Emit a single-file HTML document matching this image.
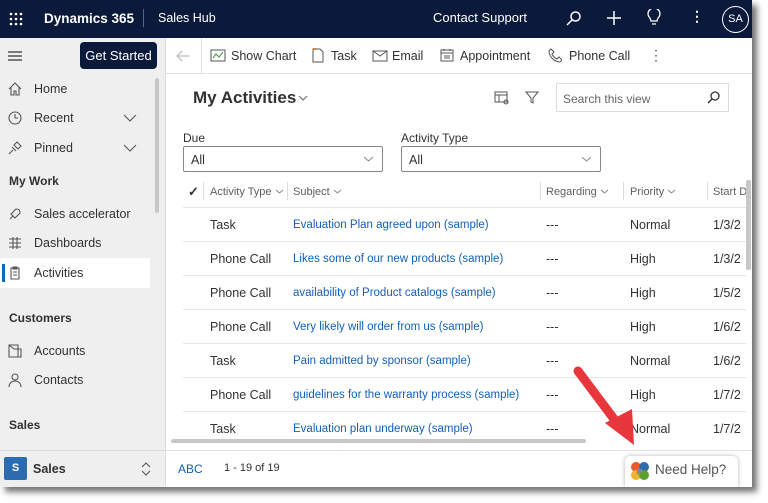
<!DOCTYPE html>
<html><head><meta charset="utf-8"><style>
*{margin:0;padding:0;box-sizing:border-box}
body{width:768px;height:503px;background:#fff;font-family:"Liberation Sans",sans-serif;position:relative;overflow:hidden;font-size:12px;color:#323130}
.frame{position:absolute;left:0;top:0;width:752px;height:487px;box-shadow:5px 5px 6px rgba(0,0,0,.55);overflow:hidden;background:#fff}
.top{position:absolute;left:0;top:0;width:752px;height:38px;background:#0b1a3b;color:#fff}
.a{position:absolute}
.side{position:absolute;left:0;top:38px;width:166px;height:449px;background:#efefef;border-right:1px solid #ddd}
.nav{position:absolute;left:34px;font-size:12.5px;color:#323130}
.ic{position:absolute;left:8px;width:14px;height:14px}
.cmd{position:absolute;left:166px;top:38px;width:586px;height:36px;border-bottom:1px solid #e1e1e1;font-size:12.5px}
.row{position:absolute;left:183px;width:563px;height:34px;border-bottom:1px solid #e6e6e6;font-size:12.5px}
.row span{position:absolute;top:10px}
.row span.lk{top:11px}
.lk{color:#1160b7;font-size:11.5px}
.hd{position:absolute;top:186px;font-size:11px;color:#605e5c}
.hd svg{margin-left:3px;vertical-align:1px}
.sel{position:absolute;height:26px;border:1px solid #8a8886;border-radius:2px;font-size:12.5px;padding:6px 7px}
</style></head><body><div class="frame">
<div class="top">
<svg class="a" style="left:9px;top:12px" width="14" height="14"><g fill="#fff"><circle cx="2" cy="2" r="1.3"/><circle cx="7" cy="2" r="1.3"/><circle cx="12" cy="2" r="1.3"/><circle cx="2" cy="7" r="1.3"/><circle cx="7" cy="7" r="1.3"/><circle cx="12" cy="7" r="1.3"/><circle cx="2" cy="12" r="1.3"/><circle cx="7" cy="12" r="1.3"/><circle cx="12" cy="12" r="1.3"/></g></svg>
<div class="a" style="left:44px;top:11px;font-weight:bold;font-size:13.5px">Dynamics 365</div>
<div class="a" style="left:143px;top:9px;width:1px;height:18px;background:#5a6580"></div>
<div class="a" style="left:158px;top:11px;font-size:12.5px">Sales Hub</div>
<div class="a" style="left:433px;top:10px;font-size:13px">Contact Support</div>
<svg class="a" style="left:566px;top:10px" width="16" height="16" fill="none" stroke="#fff" stroke-width="1.5"><circle cx="9.5" cy="6.5" r="4.5"/><path d="M6 10l-5 5"/></svg>
<svg class="a" style="left:606px;top:10px" width="16" height="16" stroke="#fff" stroke-width="1.5"><path d="M8 1v14M1 8h14"/></svg>
<svg class="a" style="left:647px;top:9px" width="14" height="18" fill="none" stroke="#fff" stroke-width="1.3"><path d="M4 12c0-3-3-4-3-7a6 6 0 0 1 12 0c0 3-3 4-3 7zM5 15h4"/></svg>
<div class="a" style="left:690px;top:8px;font-size:14px;font-weight:bold">⋮</div>
<div class="a" style="left:722px;top:6px;width:27px;height:27px;border:1px solid #fff;border-radius:50%;font-size:11px;text-align:center;line-height:25px">SA</div>
</div>
<div class="side">
<svg class="a" style="left:8px;top:13px" width="14" height="10" stroke="#333" stroke-width="1.2"><path d="M0 1h14M0 5h14M0 9h14"/></svg>
<div class="a" style="left:80px;top:4px;width:77px;height:27px;background:#0b1a3b;border-radius:4px;color:#fff;font-size:13px;text-align:center;line-height:27px">Get Started</div>
<div class="a" style="left:155px;top:40px;width:4px;height:135px;background:#c8c8c8;border-radius:2px"></div>
<svg class="ic" style="top:44px" fill="none" stroke="#555" stroke-width="1.1"><path d="M1 7L7 1l6 6M3 5v8h3v-4h2v4h3V5"/></svg><div class="nav" style="top:44px">Home</div>
<svg class="ic" style="top:73px" fill="none" stroke="#555" stroke-width="1.1"><circle cx="7" cy="7" r="6"/><path d="M7 3v4h3"/></svg><div class="nav" style="top:73px">Recent</div>
<svg class="a" style="left:123px;top:76px" width="14" height="8" fill="none" stroke="#555" stroke-width="1.1"><path d="M1 1l6 6 6-6"/></svg>
<svg class="ic" style="top:103px" fill="none" stroke="#555" stroke-width="1.1"><path d="M1 13l4-4M4 6l4 4M6 4l4 4 3-3-4-4z"/></svg><div class="nav" style="top:103px">Pinned</div>
<svg class="a" style="left:123px;top:106px" width="14" height="8" fill="none" stroke="#555" stroke-width="1.1"><path d="M1 1l6 6 6-6"/></svg>
<div class="a" style="left:9px;top:136px;font-weight:bold;font-size:12px">My Work</div>
<svg class="ic" style="top:169px" fill="none" stroke="#555" stroke-width="1.1"><path d="M2 12l3-3M8 2c3 0 4 1 4 4l-5 5-4-4z"/></svg><div class="nav" style="top:169px">Sales accelerator</div>
<svg class="ic" style="top:198px" fill="none" stroke="#555" stroke-width="1.1"><path d="M1 3h12M1 7h12M1 11h12M5 1v12M9 1v12"/></svg><div class="nav" style="top:198px">Dashboards</div>
<div class="a" style="left:0;top:220px;width:150px;height:30px;background:#fff"></div>
<div class="a" style="left:2px;top:226px;width:3px;height:18px;background:#0f6cbd"></div>
<svg class="ic" style="top:228px" fill="none" stroke="#555" stroke-width="1.1"><path d="M3 2h8v11H3zM5 1h4v2H5zM5 6h4M5 9h4"/></svg><div class="nav" style="top:228px">Activities</div>
<div class="a" style="left:9px;top:273px;font-weight:bold;font-size:12px">Customers</div>
<svg class="ic" style="top:306px" fill="none" stroke="#555" stroke-width="1.1"><path d="M1 1h9v12H1zM1 1l5 4h7v8H10"/></svg><div class="nav" style="top:306px">Accounts</div>
<svg class="ic" style="top:335px" fill="none" stroke="#555" stroke-width="1.1"><circle cx="7" cy="4" r="3"/><path d="M1 14c0-4 3-6 6-6s6 2 6 6"/></svg><div class="nav" style="top:335px">Contacts</div>
<div class="a" style="left:9px;top:380px;font-weight:bold;font-size:12px">Sales</div>
<div class="a" style="left:0;top:412px;width:166px;height:1px;background:#ddd"></div>
<div class="a" style="left:4px;top:419px;width:23px;height:23px;background:#2b6cb0;border-radius:2px;color:#fff;font-size:11px;font-weight:bold;text-align:center;line-height:23px">S</div>
<div class="a" style="left:33px;top:424px;font-weight:bold;font-size:12.5px">Sales</div>
<svg class="a" style="left:141px;top:423px" width="10" height="16" fill="none" stroke="#555" stroke-width="1.1"><path d="M1 6l4-4 4 4M1 10l4 4 4-4"/></svg>
</div>
<div class="cmd">
<div class="a" style="left:35px;top:0;width:1px;height:36px;background:#e1e1e1"></div>
<svg class="a" style="left:10px;top:12px" width="14" height="12" fill="none" stroke="#bbb" stroke-width="1.2"><path d="M13 6H1M6 1L1 6l5 5"/></svg>
<svg class="a" style="left:44px;top:11px" width="16" height="14" fill="none" stroke="#555"><rect x="1" y="1" width="14" height="11"/><path d="M3 9l3-4 3 3 4-5" stroke="#3a8a3a"/></svg>
<div class="a" style="left:65px;top:11px">Show Chart</div>
<svg class="a" style="left:146px;top:10px" width="12" height="15" fill="none" stroke="#555"><path d="M1 1h7l3 3v10H1z"/><path d="M1 1h3" stroke="#e08030" stroke-width="2"/></svg>
<div class="a" style="left:165px;top:11px">Task</div>
<svg class="a" style="left:206px;top:12px" width="16" height="12" fill="none" stroke="#555"><path d="M1 1h14v10H1zM1 1l7 5 7-5"/></svg>
<div class="a" style="left:226px;top:11px">Email</div>
<svg class="a" style="left:274px;top:10px" width="14" height="14" fill="none" stroke="#555"><rect x="1" y="2" width="12" height="11"/><path d="M1 5h12M4 1v2M10 1v2M4 8h6M4 10h6"/></svg>
<div class="a" style="left:294px;top:11px">Appointment</div>
<svg class="a" style="left:382px;top:10px" width="14" height="15" fill="none" stroke="#555"><path d="M3 1l3 3-2 2c1 2 3 4 5 5l2-2 3 3-2 2C6 14 1 8 1 3z"/></svg>
<div class="a" style="left:403px;top:11px">Phone Call</div>
<div class="a" style="left:483px;top:9px;font-size:14px;color:#555">⋮</div>
</div>
<div class="a" style="left:193px;top:88px;font-size:17px;font-weight:bold;color:#323130">My Activities</div>
<svg class="a" style="left:298px;top:95px" width="10" height="6" fill="none" stroke="#666"><path d="M1 1l4 4 4-4"/></svg>
<svg class="a" style="left:494px;top:91px" width="16" height="14" fill="none" stroke="#555"><rect x="1" y="1" width="12" height="10"/><path d="M1 4h12M5 4v7"/><circle cx="12" cy="11" r="2"/></svg>
<svg class="a" style="left:525px;top:91px" width="14" height="13" fill="none" stroke="#555"><path d="M1 1h12L8 7v5L6 11V7z"/></svg>
<div class="a" style="left:556px;top:83px;width:173px;height:29px;border:1px solid #ddd;font-size:12px;color:#666;padding:8px 6px">Search this view</div>
<svg class="a" style="left:707px;top:91px" width="13" height="13" fill="none" stroke="#333" stroke-width="1.3"><circle cx="8" cy="5" r="4"/><path d="M5 8l-4 4"/></svg>
<div class="a" style="left:183px;top:131px;font-size:12px;color:#323130">Due</div>
<div class="sel" style="left:183px;top:146px;width:200px">All<svg style="position:absolute;right:8px;top:9px" width="11" height="6" fill="none" stroke="#888"><path d="M1 1l4.5 4 4.5-4"/></svg></div>
<div class="a" style="left:401px;top:131px;font-size:12px">Activity Type</div>
<div class="sel" style="left:401px;top:146px;width:200px">All<svg style="position:absolute;right:8px;top:9px" width="11" height="6" fill="none" stroke="#888"><path d="M1 1l4.5 4 4.5-4"/></svg></div>
<div class="a" style="left:188px;top:184px;font-size:13px;font-weight:bold">✓</div>
<div class="a" style="left:203px;top:182px;width:1px;height:18px;background:#ddd"></div>
<div class="hd" style="left:210px">Activity Type<svg width="9" height="5" fill="none" stroke="#888"><path d="M1 1l3.5 3 3.5-3"/></svg></div>
<div class="a" style="left:287px;top:182px;width:1px;height:18px;background:#ddd"></div>
<div class="hd" style="left:293px">Subject<svg width="9" height="5" fill="none" stroke="#888"><path d="M1 1l3.5 3 3.5-3"/></svg></div>
<div class="a" style="left:540px;top:182px;width:1px;height:18px;background:#ddd"></div>
<div class="hd" style="left:546px">Regarding<svg width="9" height="5" fill="none" stroke="#888"><path d="M1 1l3.5 3 3.5-3"/></svg></div>
<div class="a" style="left:623px;top:182px;width:1px;height:18px;background:#ddd"></div>
<div class="hd" style="left:630px">Priority<svg width="9" height="5" fill="none" stroke="#888"><path d="M1 1l3.5 3 3.5-3"/></svg></div>
<div class="a" style="left:707px;top:182px;width:1px;height:18px;background:#ddd"></div>
<div class="hd" style="left:713px">Start D</div>
<div class="a" style="left:183px;top:207px;width:563px;height:1px;background:#e6e6e6"></div>
<div class="row" style="top:208px"><span style="left:27px">Task</span><span class="lk" style="left:110px">Evaluation Plan agreed upon (sample)</span><span style="left:363px">---</span><span style="left:447px">Normal</span><span style="left:530px">1/3/2</span></div>
<div class="row" style="top:242px"><span style="left:27px">Phone Call</span><span class="lk" style="left:110px">Likes some of our new products (sample)</span><span style="left:363px">---</span><span style="left:447px">High</span><span style="left:530px">1/3/2</span></div>
<div class="row" style="top:276px"><span style="left:27px">Phone Call</span><span class="lk" style="left:110px">availability of Product catalogs (sample)</span><span style="left:363px">---</span><span style="left:447px">High</span><span style="left:530px">1/5/2</span></div>
<div class="row" style="top:310px"><span style="left:27px">Phone Call</span><span class="lk" style="left:110px">Very likely will order from us (sample)</span><span style="left:363px">---</span><span style="left:447px">High</span><span style="left:530px">1/6/2</span></div>
<div class="row" style="top:344px"><span style="left:27px">Task</span><span class="lk" style="left:110px">Pain admitted by sponsor (sample)</span><span style="left:363px">---</span><span style="left:447px">Normal</span><span style="left:530px">1/6/2</span></div>
<div class="row" style="top:378px"><span style="left:27px">Phone Call</span><span class="lk" style="left:110px">guidelines for the warranty process (sample)</span><span style="left:363px">---</span><span style="left:447px">High</span><span style="left:530px">1/7/2</span></div>
<div class="row" style="top:412px;border:none"><span style="left:27px">Task</span><span class="lk" style="left:110px">Evaluation plan underway (sample)</span><span style="left:363px">---</span><span style="left:447px">Normal</span><span style="left:530px">1/7/2</span></div>
<div class="a" style="left:746px;top:180px;width:5px;height:90px;background:#c8c8c8;border-radius:2px"></div>
<div class="a" style="left:171px;top:439px;width:415px;height:4px;background:#c8c8c8;border-radius:2px"></div>
<div class="a" style="left:166px;top:450px;width:586px;height:1px;background:#e1e1e1"></div>
<div class="a" style="left:178px;top:462px;color:#1160b7;font-size:12px">ABC</div>
<div class="a" style="left:224px;top:462px;font-size:11px">1 - 19 of 19</div>
<div class="a" style="left:625px;top:456px;width:113px;height:31px;background:#fff;border-radius:5px 5px 0 0;box-shadow:0 0 4px rgba(0,0,0,.3)"></div>
<svg class="a" style="left:629px;top:460px" width="22" height="22"><circle cx="7" cy="7" r="5" fill="#e85a2a"/><circle cx="15" cy="7" r="5" fill="#2b6cb0"/><circle cx="7" cy="15" r="5" fill="#f0b429"/><circle cx="15" cy="15" r="5" fill="#5aa02c"/><path d="M8 7l7 4-7 4z" fill="#888"/></svg>
<div class="a" style="left:655px;top:462px;font-size:13.5px;color:#555">Need Help?</div>
<svg class="a" style="left:570px;top:365px" width="70" height="85"><path d="M8 6L50 62" stroke="#e8373c" stroke-width="9" stroke-linecap="round"/><path d="M35 58L64 80 62 44z" fill="#e8373c"/></svg>
</div></body></html>
